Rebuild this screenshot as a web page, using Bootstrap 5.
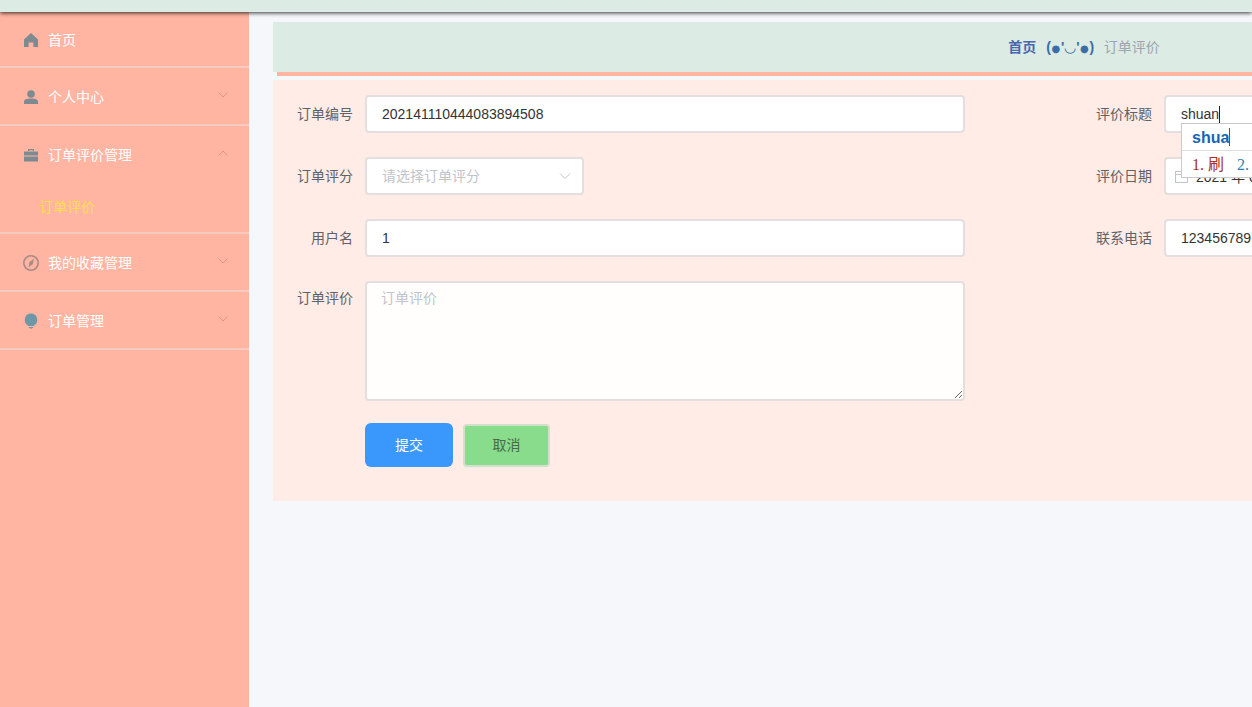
<!DOCTYPE html>
<html lang="zh">
<head>
  <meta charset="UTF-8" />
  <meta name="viewport" content="width=device-width, initial-scale=1" />
  <title>订单评价</title>
  <link href="https://cdn.jsdelivr.net/npm/bootstrap@5.3.0/dist/css/bootstrap.min.css" rel="stylesheet" />
  <style>
    html, body { height: 707px; overflow: hidden; }
    body { background: #f5f7fa; font-family: "Liberation Sans", "Noto Sans CJK SC", sans-serif; font-size: 14px; color: #606266; }
    .top-strip { height: 12px; background: #dcebe4; box-shadow: 0 1px 4px rgba(0,0,0,.8); position: relative; z-index: 2; }
    .page-wrap { width: 1895px; height: 695px; }
    .side-menu { width: 249px; flex: none; background: #ffb5a1; }
    .side-item { height: 58px; border-bottom: 2px solid #f5cabf; padding: 2px 21px 0 23px; color: #fff; }
    .side-item.first { height: 56px; }
    .side-item svg.ico { width: 16px; height: 16px; fill: #7d8b91; flex: none; margin-right: 9px; }
    .side-item svg.ico-compass { fill: #a98a86; }
    .side-item svg.ico-bulb { fill: #6f97a8; }
    .side-item .chev { width: 10px; height: 6px; margin-left: auto; margin-top: -4px; fill: none; stroke: #ee8f7e; stroke-width: 1; }
    .side-group { border-bottom: 2px solid #f5cabf; }
    .side-group .side-item { border-bottom: 0; padding-top: 0; }
    .side-sub { height: 48px; padding: 0 0 2px 39px; color: #ffdf4d; }
    .main-area { padding: 10px 0 0 24px; width: 1646px; flex: none; }
    .crumb-bar { height: 50px; background: #dcebe4; font-size: 14px; }
    .crumb-bar b { color: #4a66ad; font-weight: 700; }
    .crumb-bar .face { color: #3a6ea5; font-weight: 700; margin: 0 9px 0 10px; letter-spacing: .6px; font-family: "Liberation Sans", "DejaVu Sans", sans-serif; font-size: 14px; }
    .crumb-bar .face-dot { font-family: "DejaVu Sans", sans-serif; font-size: 10px; font-weight: 700; }
    .crumb-bar span.cur { color: #9aa6ae; }
    .crumb-line { height: 4px; margin-left: 4px; background: #ffb5a1; }
    .form-panel { margin-top: 4px; height: 421px; background: #ffece6; padding-top: 15px; }
    .form-rows { display: grid; grid-template-columns: 799px 799px; row-gap: 24px; }
    .field-row { display: flex; align-items: center; }
    .field-row.top { align-items: flex-start; }
    .field-label { width: 80px; text-align: right; margin-right: 12px; color: #606266; flex: none; }
    .field-row.top .field-label { margin-top: 7px; }
    .field-input.form-control, .field-input.form-select {
      width: 600px; height: 38px; border: 2px solid #e3dfdf; border-radius: 4px; padding: 0 15px;
      font-size: 14px; color: #333; background-color: #fff; box-shadow: none; font-family: inherit;
    }
    .field-input.form-select {
      width: 219px; color: #c0c4cc;
      background-image: url("data:image/svg+xml,%3Csvg xmlns='http://www.w3.org/2000/svg' viewBox='0 0 12 8'%3E%3Cpath d='M1 1.5l5 5 5-5' fill='none' stroke='%23c0c4cc' stroke-width='1'/%3E%3C/svg%3E");
      background-position: right 11px center; background-size: 12px 8px;
    }
    .field-input.date-input { padding-left: 30px; }
    textarea.field-input.form-control { height: 120px; padding: 5px 14px; resize: vertical; background-color: #fffefd; }
    .field-input::placeholder { color: #c0c4cc; }
    .date-wrap { position: relative; }
    .date-wrap svg { position: absolute; left: 11px; top: 13px; width: 13px; height: 13px; fill: none; stroke: #c0c4cc; }
    .form-btns { margin: 22px 0 0 92px; align-items: center; gap: 10px; }
    .btn-send { width: 88px; height: 44px; background: #3a97fb; color: #fff; border: 0; border-radius: 6px; font-size: 14px; padding: 0; }
    .btn-back { width: 87px; height: 43px; background: #88dc8c; color: #466b49; border: 2px solid #cfe0cb; border-radius: 4px; font-size: 14px; padding: 0; }
    .ime-box { position: absolute; left: 1181px; top: 123px; width: 140px; height: 55px; background: #fff; border: 1px solid #c9c9c9; z-index: 3; }
    .ime-code { height: 27px; padding-left: 10px; color: #1565b5; font-weight: 700; font-size: 16px; line-height: 27px; border-bottom: 1px solid #dedede; }
    .ime-code i { display: inline-block; width: 1px; height: 18px; background: #a33; vertical-align: -3px; }
    .ime-list { padding-left: 10px; font-family: "Liberation Serif", "Noto Sans CJK SC", serif; font-size: 16px; line-height: 27px; color: #a8321f; white-space: pre; }
    .ime-list span { color: #2b80b8; margin-left: 13px; }
    .typed-caret { position: absolute; left: 1219px; top: 106px; width: 1px; height: 17px; background: #222; z-index: 3; }
  </style>
</head>
<body>

  <div class="top-strip"></div>

  <div class="page-wrap d-flex">
    <!-- 左侧菜单 -->
    <div class="side-menu">
      <div class="side-item first d-flex align-items-center">
        <svg class="ico" viewBox="0 0 16 16"><path d="M8 1L1 7.500V15h4.600v-4.500h4.800V15H15V7.500z"/></svg>首页
      </div>
      <div class="side-item d-flex align-items-center">
        <svg class="ico" viewBox="0 0 16 16"><circle cx="8" cy="5" r="3.800"/><path d="M1 15v-2.200C1 10.600 3.500 9.500 8 9.500s7 1.100 7 3.300V15z"/></svg>个人中心
        <svg class="chev" viewBox="0 0 10 6"><path d="M.5.500l4.500 4.500 4.500-4.500"/></svg>
      </div>
      <div class="side-group">
        <div class="side-item d-flex align-items-center">
          <svg class="ico" viewBox="0 0 16 16"><path d="M5 4V2h6v2h-1.200V3.200H6.200V4zM1 4.600h14V8.500H1zM1 9.500h14V14.500H1z"/></svg>订单评价管理
          <svg class="chev" viewBox="0 0 10 6"><path d="M.5 5.500L5 1l4.500 4.500"/></svg>
        </div>
        <div class="side-sub d-flex align-items-center">订单评价</div>
      </div>
      <div class="side-item d-flex align-items-center">
        <svg class="ico ico-compass" viewBox="0 0 16 16"><path fill-rule="evenodd" d="M8 0a8 8 0 1 1 0 16A8 8 0 0 1 8 0zm0 1.600a6.400 6.400 0 1 0 0 12.800A6.400 6.400 0 0 0 8 1.600z"/><path d="M11 3.800L9.700 9.200 5.500 12.300l1-5.200z"/></svg>我的收藏管理
        <svg class="chev" viewBox="0 0 10 6"><path d="M.5.500l4.500 4.500 4.500-4.500"/></svg>
      </div>
      <div class="side-item d-flex align-items-center">
        <svg class="ico ico-bulb" viewBox="0 0 16 16"><path d="M8 .5a6.300 6.300 0 0 0-3.200 11.700V13h6.400v-.8A6.300 6.300 0 0 0 8 .5zM5.800 14h4.400v.8L8 15.700l-2.200-.9z"/></svg>订单管理
        <svg class="chev" viewBox="0 0 10 6"><path d="M.5.500l4.500 4.500 4.500-4.500"/></svg>
      </div>
    </div>

    <!-- 内容 -->
    <div class="main-area">
      <div class="crumb-bar d-flex align-items-center justify-content-center">
        <b>首页</b><span class="face">(<span class="face-dot">●</span>'◡'<span class="face-dot">●</span>)</span><span class="cur">订单评价</span>
      </div>
      <div class="crumb-line"></div>
      <div class="form-panel">
        <div class="form-rows">
          <div class="field-row">
            <label class="field-label">订单编号</label>
            <input class="form-control field-input" type="text" value="202141110444083894508" />
          </div>
          <div class="field-row">
            <label class="field-label">评价标题</label>
            <input class="form-control field-input" type="text" value="shuan" />
          </div>
          <div class="field-row">
            <label class="field-label">订单评分</label>
            <select class="form-select field-input"><option>请选择订单评分</option></select>
          </div>
          <div class="field-row">
            <label class="field-label">评价日期</label>
            <div class="date-wrap">
              <svg viewBox="0 0 13 13"><rect x=".5" y="1.500" width="12" height="11"/><path d="M.5 4.500h12"/></svg>
              <input class="form-control field-input date-input" type="text" value="2021 年 01 月 01 日" />
            </div>
          </div>
          <div class="field-row">
            <label class="field-label">用户名</label>
            <input class="form-control field-input" type="text" value="1" />
          </div>
          <div class="field-row">
            <label class="field-label">联系电话</label>
            <input class="form-control field-input" type="text" value="123456789" />
          </div>
          <div class="field-row top">
            <label class="field-label">订单评价</label>
            <textarea class="form-control field-input" placeholder="订单评价"></textarea>
          </div>
        </div>
        <div class="form-btns d-flex">
          <button class="btn btn-send" type="button">提交</button>
          <button class="btn btn-back" type="button">取消</button>
        </div>
      </div>
    </div>
  </div>

  <!-- 输入法候选框 -->
  <div class="typed-caret"></div>
  <div class="ime-box">
    <div class="ime-code">shua<i></i></div>
    <div class="ime-list">1. 刷<span>2.</span></div>
  </div>

</body>
</html>
